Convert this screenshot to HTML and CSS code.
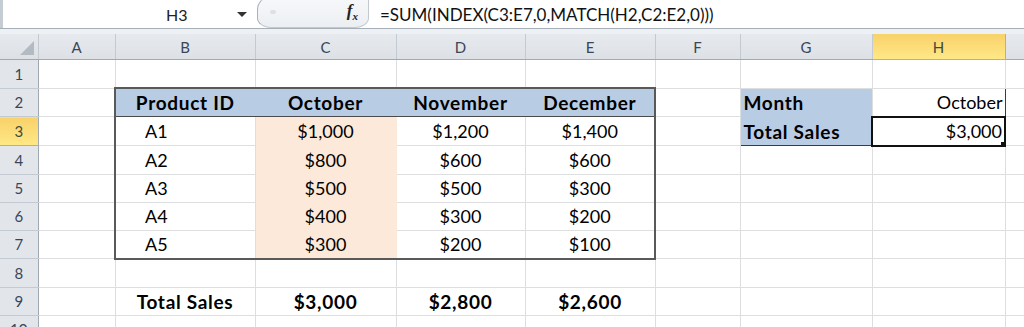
FILE: index.html
```html
<!DOCTYPE html>
<html lang="en">

<head>
    <meta charset="UTF-8">
    <title>Sales Lookup</title>
    <link rel="stylesheet" href="styles.css">
</head>

<body>

    <!-- Formula bar -->
    <div class="formula-bar">
        <div class="name-box">
            <span class="name">H3</span>
            <span class="arrow"></span>
        </div>
        <div class="fx-pill">
            <span class="dot"></span>
            <span class="fx"><i>f</i><sub>x</sub></span>
        </div>
        <div class="formula">=SUM(INDEX(C3:E7,0,MATCH(H2,C2:E2,0)))</div>
    </div>
    <div class="bar-gap"></div>

    <!-- Sheet grid -->
    <table class="sheet">
        <colgroup>
            <col style="width:38px">
            <col style="width:77px">
            <col style="width:140px">
            <col style="width:141px">
            <col style="width:129px">
            <col style="width:130px">
            <col style="width:85px">
            <col style="width:132px">
            <col style="width:133px">
            <col style="width:40px">
        </colgroup>
        <tr class="col-heads">
            <th class="corner"><span class="tri"></span></th>
            <th>A</th><th>B</th><th>C</th><th>D</th><th>E</th><th>F</th><th>G</th>
            <th class="active">H</th><th></th>
        </tr>
        <tr>
            <th class="rh">1</th>
            <td></td><td></td><td></td><td></td><td></td><td></td><td></td><td></td><td></td>
        </tr>
        <tr>
            <th class="rh">2</th>
            <td></td>
            <td class="hd box-l box-t">Product ID</td>
            <td class="hd box-t">October</td>
            <td class="hd box-t">November</td>
            <td class="hd box-t box-r">December</td>
            <td></td>
            <td class="lbl lk-l lk-t">Month</td>
            <td class="val lk-t lk-r lk-mid">October</td>
            <td></td>
        </tr>
        <tr>
            <th class="rh active">3</th>
            <td></td>
            <td class="id box-l">A1</td>
            <td class="num oct">$1,000</td>
            <td class="num">$1,200</td>
            <td class="num box-r">$1,400</td>
            <td></td>
            <td class="lbl lk-l lk-b">Total Sales</td>
            <td class="val sel">$3,000<span class="handle"></span></td>
            <td></td>
        </tr>
        <tr>
            <th class="rh">4</th>
            <td></td>
            <td class="id box-l">A2</td>
            <td class="num oct">$800</td>
            <td class="num">$600</td>
            <td class="num box-r">$600</td>
            <td></td><td></td><td></td><td></td>
        </tr>
        <tr>
            <th class="rh">5</th>
            <td></td>
            <td class="id box-l">A3</td>
            <td class="num oct">$500</td>
            <td class="num">$500</td>
            <td class="num box-r">$300</td>
            <td></td><td></td><td></td><td></td>
        </tr>
        <tr>
            <th class="rh">6</th>
            <td></td>
            <td class="id box-l">A4</td>
            <td class="num oct">$400</td>
            <td class="num">$300</td>
            <td class="num box-r">$200</td>
            <td></td><td></td><td></td><td></td>
        </tr>
        <tr>
            <th class="rh">7</th>
            <td></td>
            <td class="id box-l box-b">A5</td>
            <td class="num oct box-b">$300</td>
            <td class="num box-b">$200</td>
            <td class="num box-r box-b">$100</td>
            <td></td><td></td><td></td><td></td>
        </tr>
        <tr>
            <th class="rh">8</th>
            <td></td><td></td><td></td><td></td><td></td><td></td><td></td><td></td><td></td>
        </tr>
        <tr>
            <th class="rh">9</th>
            <td></td>
            <td class="total">Total Sales</td>
            <td class="total">$3,000</td>
            <td class="total">$2,800</td>
            <td class="total">$2,600</td>
            <td></td><td></td><td></td><td></td>
        </tr>
        <tr>
            <th class="rh">10</th>
            <td></td><td></td><td></td><td></td><td></td><td></td><td></td><td></td><td></td>
        </tr>
    </table>

</body>

</html>
```

FILE: styles.css
```css
body {
    margin: 0;
    background-color: #fff;
    font-family: 'Lato', 'Open Sans', sans-serif;
    color: #000;
    overflow: hidden;
}

/* Formula bar */
.formula-bar {
    display: flex;
    align-items: center;
    height: 28px;
    border-bottom: 1px solid #a7afb9;
    overflow: hidden;
}

.name-box {
    display: flex;
    align-items: center;
    width: 251px;
    height: 100%;
    border-left: 3px solid #c6ccd3;
    box-sizing: border-box;
    font-size: 16px;
    color: #222;
}

.name-box .name {
    padding-left: 163px;
}

.name-box .arrow {
    margin-left: auto;
    margin-right: 4px;
    width: 0;
    height: 0;
    border-left: 5px solid transparent;
    border-right: 5px solid transparent;
    border-top: 5px solid #333;
}

.fx-pill {
    display: flex;
    align-items: center;
    width: 112px;
    height: 32px;
    margin-left: 6px;
    margin-top: -4px;
    border: 1px solid #c3c9d0;
    border-left-color: #aab1ba;
    border-radius: 14px 0 14px 14px / 14px 0 10px 10px;
    background: linear-gradient(#f7f8fa, #eceff2);
    box-sizing: border-box;
}

.fx-pill .dot {
    width: 6px;
    height: 4px;
    margin-left: 12px;
    border-radius: 3px;
    background-color: #dde1e6;
}

.fx-pill .fx {
    margin-left: auto;
    margin-right: 10px;
    font-family: 'Liberation Serif', serif;
    font-weight: 700;
    font-size: 17px;
    color: #222;
}

.fx-pill .fx sub {
    font-size: 11px;
    font-style: italic;
}

.formula {
    padding-left: 11px;
    font-size: 17px;
    white-space: nowrap;
    color: #111;
}

.bar-gap {
    height: 5px;
    background-color: #eef1f4;
}

/* Sheet grid */
.sheet {
    table-layout: fixed;
    border-collapse: collapse;
    width: 1045px;
    font-size: 18px;
}

.sheet td,
.sheet th {
    height: 27px;
    padding: 0;
    border-right: 1px solid #dcdee0;
    border-bottom: 1px solid #dcdee0;
    white-space: nowrap;
    overflow: hidden;
}

.col-heads th {
    height: 25px;
    font-weight: 400;
    font-size: 15px;
    color: #3a4656;
    background: linear-gradient(#e6e9ed, #dde1e6);
    border-right: 1px solid #c4cad1;
    border-bottom: 1px solid #9fa9b4;
}

.corner {
    position: relative;
}

.corner .tri {
    position: absolute;
    right: 4px;
    bottom: 4px;
    width: 0;
    height: 0;
    border-left: 14px solid transparent;
    border-bottom: 14px solid #b4bac2;
}

.rh {
    font-weight: 400;
    font-size: 15px;
    color: #3a4656;
    background-color: #e2e6eb;
    border-right: 1px solid #9fa9b4 !important;
    border-bottom: 1px solid #c4cad1 !important;
}

.sheet th.active {
    background: linear-gradient(#f8d16a, #ffe886);
    border-color: #e5a93c;
    color: #3f4c3a;
}

.sheet .rh.active {
    border-bottom-color: #e5a93c !important;
}

/* Product table */
.hd {
    font-weight: 700;
    font-size: 19px;
    letter-spacing: 0.7px;
    text-align: center;
    background-color: #b8cce4;
    border-right-color: #b8cce4 !important;
    border-bottom: 1px solid #4a4a4a !important;
}

.id {
    padding-left: 29px !important;
}

.num {
    text-align: center;
}

.oct {
    background-color: #fde9d9;
    border-right-color: #fde9d9 !important;
    border-bottom-color: #fde9d9 !important;
}

.box-l {
    border-left: 2px solid #595959 !important;
}

.box-r {
    border-right: 2px solid #595959 !important;
}

.box-t {
    border-top: 2px solid #595959 !important;
}

.box-b {
    border-bottom: 2px solid #595959 !important;
}

.total {
    font-weight: 700;
    font-size: 19px;
    letter-spacing: 0.7px;
    text-align: center;
}

/* Lookup box */
.lbl {
    font-weight: 700;
    font-size: 19px;
    letter-spacing: 0.7px;
    padding-left: 3px !important;
    background-color: #b8cce4;
    border-bottom-color: #b8cce4 !important;
}

.val {
    text-align: right;
    padding-right: 2px !important;
}

.lk-l {
    border-left: 1px solid #3c3c3c !important;
}

.lk-t {
    border-top: 1px solid #3c3c3c !important;
}

.lk-r {
    border-right: 1px solid #3c3c3c !important;
}

.lk-b {
    border-bottom: 1px solid #3c3c3c !important;
}

.lk-mid {
    border-left: 1px solid #3c3c3c !important;
}

.sel {
    position: relative;
    border: 2px solid #111 !important;
}

.sel .handle {
    position: absolute;
    right: -3px;
    bottom: -3px;
    width: 5px;
    height: 5px;
    background-color: #111;
    border: 1px solid #fff;
}
```
